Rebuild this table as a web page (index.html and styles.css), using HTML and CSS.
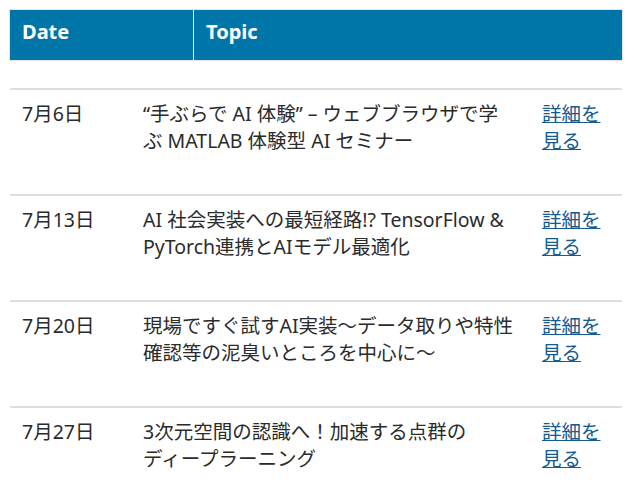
FILE: index.html
```html
<!DOCTYPE html>
<html lang="ja">
<head>
<meta charset="utf-8">
<link rel="stylesheet" href="styles.css">
</head>
<body>
<div class="schedule">
  <div class="head">
    <div class="th th-date">Date</div>
    <div class="th th-topic">Topic</div>
  </div>
  <div class="rows">
    <div class="spacer"></div>
    <div class="row">
      <div class="date">7月6日</div>
      <div class="topic">“手ぶらで AI 体験” – ウェブブラウザで学ぶ MATLAB 体験型 AI セミナー</div>
      <div class="more"><a href="#">詳細を見る</a></div>
    </div>
    <div class="row">
      <div class="date">7月13日</div>
      <div class="topic">AI 社会実装への最短経路!? TensorFlow &amp; PyTorch連携とAIモデル最適化</div>
      <div class="more"><a href="#">詳細を見る</a></div>
    </div>
    <div class="row">
      <div class="date">7月20日</div>
      <div class="topic">現場ですぐ試すAI実装～データ取りや特性確認等の泥臭いところを中心に～</div>
      <div class="more"><a href="#">詳細を見る</a></div>
    </div>
    <div class="row">
      <div class="date">7月27日</div>
      <div class="topic">3次元空間の認識へ！加速する点群の<span class="word">ディープラーニング</span></div>
      <div class="more"><a href="#">詳細を見る</a></div>
    </div>
  </div>
</div>
</body>
</html>
```
FILE: styles.css
```css
html, body {
  margin: 0;
  padding: 0;
  background: #ffffff;
}
body {
  padding: 9px 0 0 9px;
  font-family: "Noto Sans", "Noto Sans CJK JP", sans-serif;
  color: #2b2b2b;
}
.schedule {
  width: 614px;
}
.head {
  display: grid;
  grid-template-columns: 183px 1fr;
  column-gap: 1px;
  background: #ffffff;
  border: 1px solid #e4e4e4;
  height: 50px;
}
.th {
  background: #0076a8;
  color: #ffffff;
  font-weight: 700;
  font-size: 20px;
  line-height: 44px;
  padding: 0 12px 4px;
}
.rows {
  margin-left: 1px;
  width: 612px;
}
.spacer {
  height: 27px;
}
.row {
  display: grid;
  grid-template-columns: 121px 399px 92px;
  border-top: 2px solid #dddddd;
  height: 104px;
  font-size: 19.5px;
  line-height: 27px;
}
.date, .topic, .more {
  padding: 10px 12px;
}
.topic {
  padding-right: 15px;
}
.more {
  padding-right: 16px;
}
.more a {
  color: #155b8e;
  text-decoration: underline;
}
.word {
  white-space: nowrap;
}
```
